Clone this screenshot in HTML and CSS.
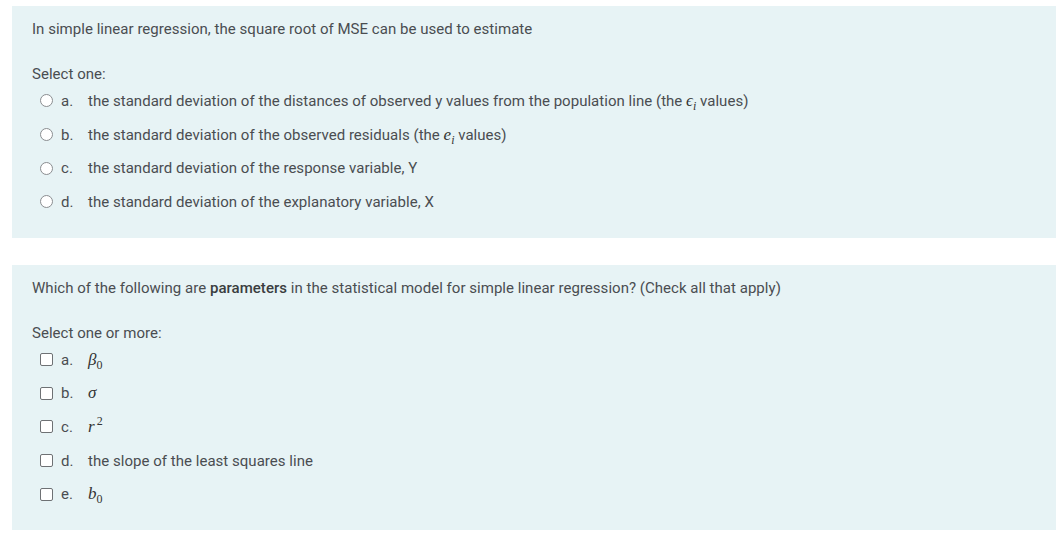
FILE: index.html
```html
<!DOCTYPE html>
<html>
<head>
<meta charset="utf-8">
<link rel="stylesheet" href="styles.css">
</head>
<body>
<div class="page">
  <div class="que">
    <div class="qtext">In simple linear regression, the square root of MSE can be used to estimate</div>
    <div class="prompt">Select one:</div>
    <div class="answers">
      <div class="opt"><span class="radio"></span><span class="letter">a.</span><span class="atext">the standard deviation of the distances of observed y values from the population line (the <span class="math">ϵ<sub>i</sub></span> values)</span></div>
      <div class="opt"><span class="radio"></span><span class="letter">b.</span><span class="atext">the standard deviation of the observed residuals (the <span class="math">e<sub>i</sub></span> values)</span></div>
      <div class="opt"><span class="radio"></span><span class="letter">c.</span><span class="atext">the standard deviation of the response variable, Y</span></div>
      <div class="opt"><span class="radio"></span><span class="letter">d.</span><span class="atext">the standard deviation of the explanatory variable, X</span></div>
    </div>
  </div>
  <div class="que">
    <div class="qtext">Which of the following are <strong>parameters</strong> in the statistical model for simple linear regression? (Check all that apply)</div>
    <div class="prompt">Select one or more:</div>
    <div class="answers">
      <div class="opt"><span class="check"></span><span class="letter">a.</span><span class="atext"><span class="math">β<sub class="up">0</sub></span></span></div>
      <div class="opt"><span class="check"></span><span class="letter">b.</span><span class="atext"><span class="math">σ</span></span></div>
      <div class="opt"><span class="check"></span><span class="letter">c.</span><span class="atext"><span class="math">r<sup class="up">2</sup></span></span></div>
      <div class="opt"><span class="check"></span><span class="letter">d.</span><span class="atext">the slope of the least squares line</span></div>
      <div class="opt"><span class="check"></span><span class="letter">e.</span><span class="atext"><span class="math">b<sub class="up">0</sub></span></span></div>
    </div>
  </div>
</div>
</body>
</html>
```

FILE: styles.css
```css
html, body {
  margin: 0;
  padding: 0;
  background: #fff;
}
body {
  font-family: Roboto, "Liberation Sans", sans-serif;
  font-size: 15px;
  line-height: 20px;
  letter-spacing: 0.03px;
  color: #4a4d51;
}
.page {
  padding: 6px 0 0 12px;
  display: flex;
  flex-direction: column;
  gap: 27px;
}
.que {
  background: #e7f3f5;
  padding: 13px 20px 19px 20px;
}
.qtext strong {
  font-weight: 500;
  color: #3a3d40;
}
.prompt {
  margin-top: 25px;
}
.answers {
  display: flex;
  flex-direction: column;
}
.opt {
  display: flex;
  align-items: center;
  height: 33.7px;
  padding-left: 8px;
}
.radio {
  width: 11px;
  height: 11px;
  border: 1px solid #8a8d90;
  border-radius: 50%;
  background: #fff;
  margin-right: 8px;
  flex: none;
}
.check {
  width: 11px;
  height: 11px;
  border: 1px solid #6e7174;
  border-radius: 2px;
  background: #fff;
  margin-right: 8px;
  flex: none;
}
.letter {
  width: 27px;
  flex: none;
}
.math {
  font-family: "Liberation Serif", "DejaVu Serif", serif;
  font-style: italic;
  font-size: 17px;
  letter-spacing: 0;
  color: #333;
}
.math sub, .math sup {
  font-size: 12px;
  line-height: 0;
}
.math sub {
  font-style: italic;
  vertical-align: -4px;
}
.math sup {
  vertical-align: 7px;
  margin-left: 2px;
}
.math .up {
  font-style: normal;
}
```
